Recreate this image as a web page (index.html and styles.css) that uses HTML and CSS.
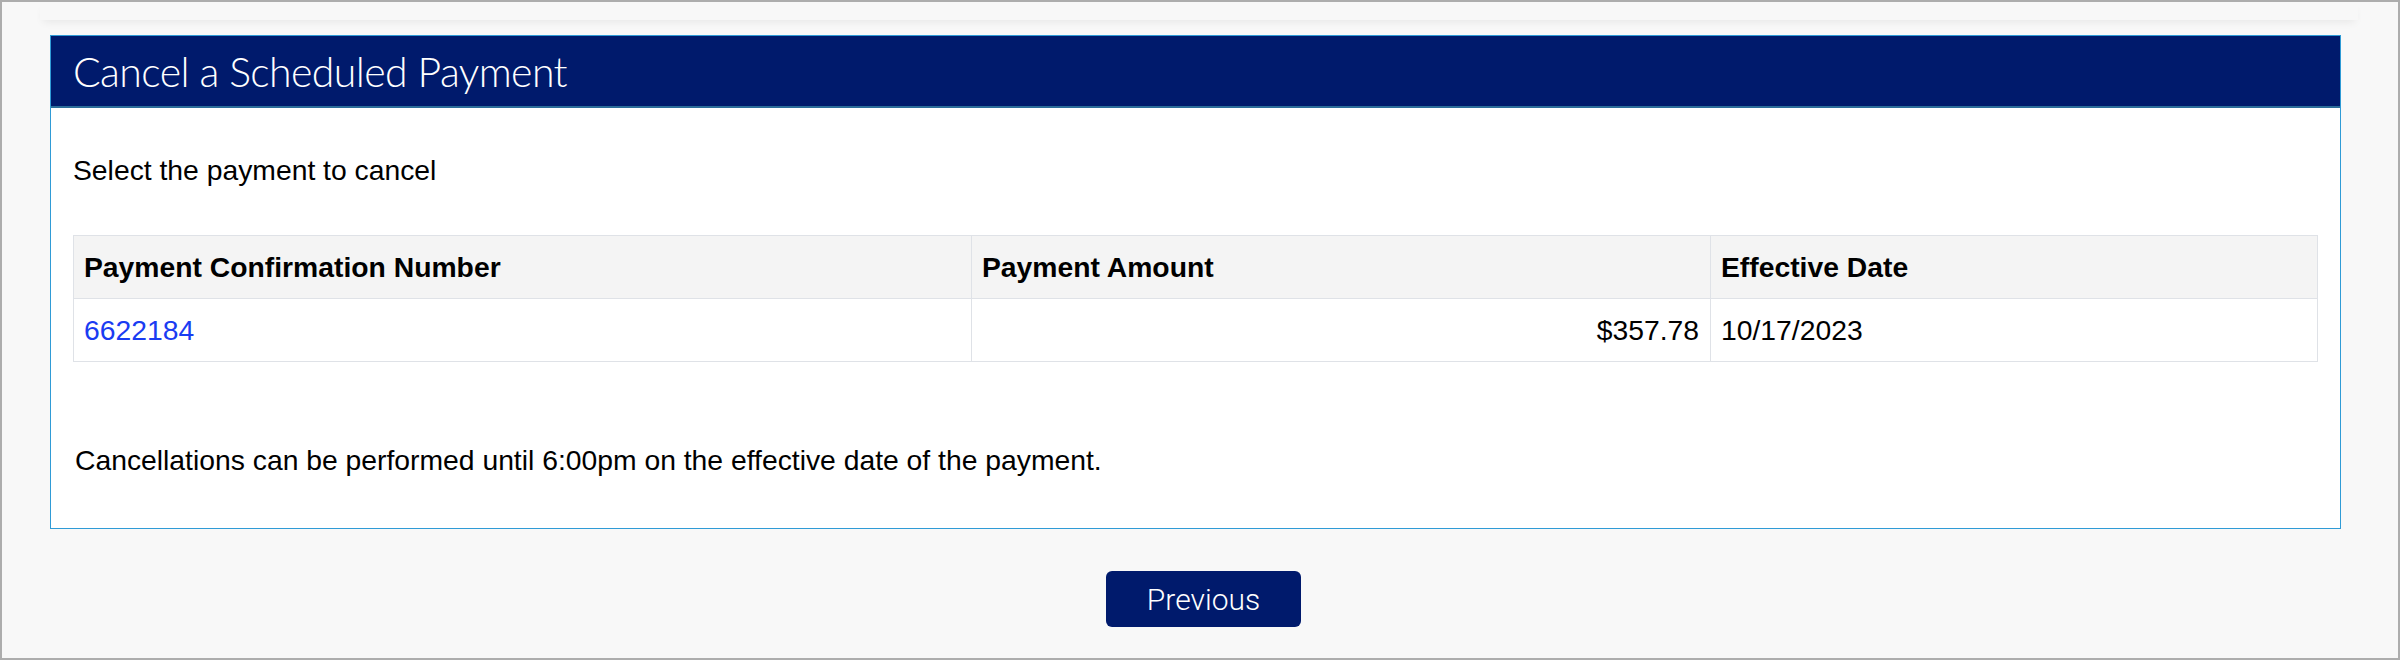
FILE: index.html
```html
<!DOCTYPE html>
<html lang="en">
<head>
<meta charset="utf-8">
<title>Cancel a Scheduled Payment</title>
<link rel="stylesheet" href="styles.css">
</head>
<body>
<div class="frame">
  <div class="topbar"></div>
  <section class="panel">
    <header class="panel-head">
      <h1 class="panel-title">Cancel a Scheduled Payment</h1>
    </header>
    <div class="panel-body">
      <p class="intro">Select the payment to cancel</p>
      <table class="pay-table">
        <thead>
          <tr>
            <th class="col-num">Payment Confirmation Number</th>
            <th class="col-amt">Payment Amount</th>
            <th class="col-date">Effective Date</th>
          </tr>
        </thead>
        <tbody>
          <tr>
            <td><a class="pay-link" href="#">6622184</a></td>
            <td class="amount">$357.78</td>
            <td>10/17/2023</td>
          </tr>
        </tbody>
      </table>
      <p class="note">Cancellations can be performed until 6:00pm on the effective date of the payment.</p>
    </div>
  </section>
  <div class="actions">
    <button class="btn-prev" type="button">Previous</button>
  </div>
</div>
</body>
</html>
```
FILE: styles.css
```css
* { box-sizing: border-box; }
html, body {
  margin: 0;
  padding: 0;
}
body {
  width: 2400px;
  height: 660px;
  background: #f8f8f8;
  font-family: "Liberation Sans", Arial, sans-serif;
  color: #000;
  overflow: hidden;
}
.frame {
  width: 2400px;
  height: 660px;
  border: 2px solid #adadad;
  background: #f8f8f8;
  padding: 0 57px 0 48px;
}
.topbar {
  height: 18px;
  margin: 0 -17px 15px -10px;
  background: #f8f8f8;
  box-shadow: 0 5px 8px -3px rgba(0, 0, 0, 0.07);
}
.panel {
  background: #fff;
  border: 1px solid #2f9bd6;
}
.panel-head {
  height: 72px;
  background: #001a6c;
  border-bottom: 2px solid #2b6d9a;
  display: flex;
  align-items: center;
  padding-left: 22px;
}
.panel-title {
  margin: 0;
  font-family: Lato, "Open Sans", sans-serif;
  font-weight: 300;
  font-size: 41px;
  letter-spacing: -0.6px;
  line-height: 1;
  color: #fff;
}
.panel-body {
  padding: 42px 22px 48px 22px;
}
.intro {
  margin: 0 0 45px 0;
  font-size: 28.3px;
  line-height: 40px;
}
.pay-table {
  width: 100%;
  border-collapse: collapse;
  font-size: 28.3px;
  line-height: 40px;
}
.pay-table th,
.pay-table td {
  border: 1px solid #dfe2e7;
  padding: 11px 11px 11px 10px;
  text-align: left;
  vertical-align: middle;
}
.pay-table th {
  background: #f4f4f4;
  font-weight: bold;
}
.col-num { width: 898px; }
.col-amt { width: 739px; }
.col-date { width: auto; }
.pay-table td.amount {
  text-align: right;
}
.pay-link {
  color: #1a3cf2;
  text-decoration: none;
}
.note {
  margin: 78px 0 0 2px;
  font-size: 28.3px;
  line-height: 40px;
}
.actions {
  display: flex;
  justify-content: center;
  margin: 42px -57px 0 -48px;
  padding-left: 7px;
}
.btn-prev {
  width: 195px;
  height: 56px;
  border: none;
  border-radius: 6px;
  background: #001a6c;
  color: #fff;
  font-family: Roboto, "Liberation Sans", sans-serif;
  font-weight: 300;
  font-size: 30px;
  padding: 0;
  cursor: pointer;
}
```
